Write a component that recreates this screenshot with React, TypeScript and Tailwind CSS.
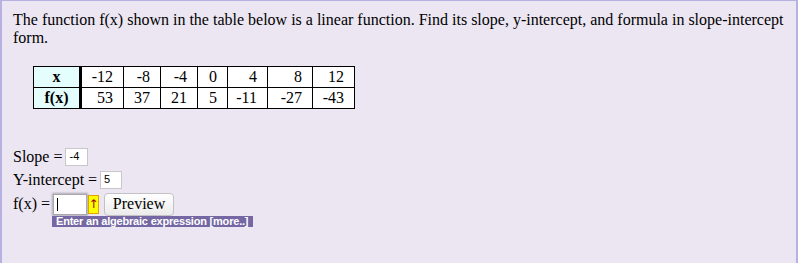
import React from 'react'

const xs = ['-12', '-8', '-4', '0', '4', '8', '12']
const fx = ['53', '37', '21', '5', '-11', '-27', '-43']
const widths = [47, 43, 37, 37, 30, 40, 45, 42]

function SmallInput({ value, w }: { value: string; w: string }) {
  return (
    <div
      className={`ml-[3px] flex h-[18px] ${w} items-center border border-[#c9c6cc] bg-white pl-[3px] font-['Liberation_Sans',sans-serif] text-[11px] leading-none text-black`}
    >
      {value}
    </div>
  )
}

export default function App() {
  return (
    <div className="relative min-h-[263px] w-[798px] border-l-2 border-r-2 border-t border-[#b6b1e0] bg-[#ece6f3] pl-[11px] pt-[10px] font-['Liberation_Serif',serif] text-[16px] leading-[18px] text-black">
      <p>
        <span className="whitespace-nowrap">
          The function f(x) shown in the table below is a linear function. Find its slope, y-intercept, and formula in slope-intercept
        </span>
        <br />
        form.
      </p>

      <table className="ml-[20px] mt-[19px] table-fixed border-collapse" style={{ width: 321 }}>
        <colgroup>
          {widths.map((w, i) => (
            <col key={i} style={{ width: w }} />
          ))}
        </colgroup>
        <tbody>
          <tr className="h-[21px]">
            <td className="border border-r-[3px] border-black bg-[#e4fdfd] p-0 text-center font-bold">x</td>
            {xs.map((v) => (
              <td key={v} className="border border-black bg-white p-0 pr-[10px] text-right">
                {v}
              </td>
            ))}
          </tr>
          <tr className="h-[21px]">
            <td className="border border-r-[3px] border-black bg-[#e4fdfd] p-0 text-center font-bold">f(x)</td>
            {fx.map((v) => (
              <td key={v} className="border border-black bg-white p-0 pr-[10px] text-right">
                {v}
              </td>
            ))}
          </tr>
        </tbody>
      </table>

      <div className="mt-[36px] flex flex-col">
        <div className="flex h-[23px] items-center">
          <span>Slope =</span>
          <SmallInput value="-4" w="w-[23px]" />
        </div>
        <div className="flex h-[23px] items-center">
          <span>Y-intercept =</span>
          <SmallInput value="5" w="w-[22px]" />
        </div>
        <div className="relative flex h-[26px] items-center">
          <span>f(x) =</span>
          <div className="ml-[3px] flex h-[21px] w-[34px] items-center border border-[#a9a6ad] bg-white pl-[3px] shadow-[0_0_2px_1px_rgba(90,90,90,0.45)]">
            <span className="h-[13px] w-px bg-black" />
          </div>
          <div className="ml-px flex h-[19px] w-[11px] items-center justify-center border border-[#e3a200] bg-[#ffff00] font-['DejaVu_Sans',sans-serif] text-[12px] leading-none text-[#a00000]">
            ↑
          </div>
          <button className="ml-[5px] h-[23px] w-[70px] rounded-[4px] border border-[#c3c1c6] bg-gradient-to-b from-white to-[#ebebeb] font-['Liberation_Serif',serif] text-[16px] leading-none text-black">
            Preview
          </button>
          <div className="absolute left-[39px] top-[25px] flex h-[11px] items-center whitespace-nowrap bg-[#7467a3] pl-[4px] pr-[5px] font-['Liberation_Sans',sans-serif] text-[11px] font-semibold leading-none tracking-[-0.2px] text-white">
            Enter an algebraic expression [more..]
          </div>
        </div>
      </div>
    </div>
  )
}
